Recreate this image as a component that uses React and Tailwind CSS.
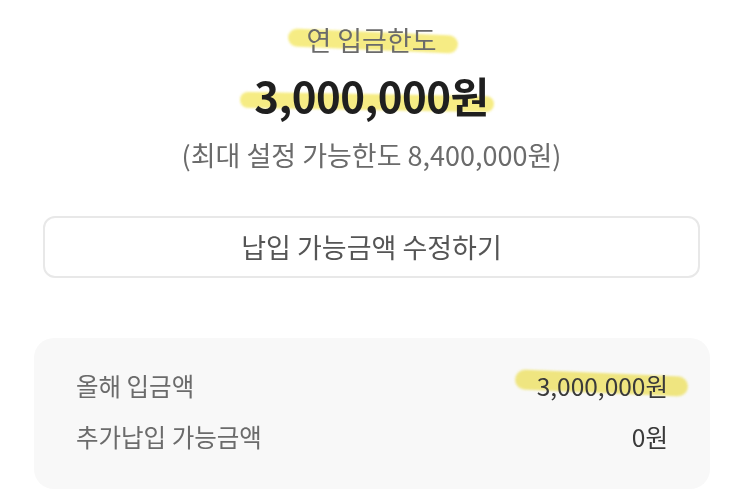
import React from "react";

function Mark({ className }) {
  return (
    <span
      className={`pointer-events-none absolute rounded-full bg-[#f3e65a] opacity-75 mix-blend-multiply blur-[1px] ${className}`}
    />
  );
}

export default function App() {
  return (
    <div className="w-[743px] h-[499px] overflow-hidden bg-white font-['Noto_Sans_CJK_KR',sans-serif]">
      <div className="flex flex-col items-center pt-[23px]">
        <div className="relative">
          <Mark className="left-[-18px] right-[-22px] top-[9px] h-[18px] rotate-[2.5deg]" />
          <span className="relative text-[27px] leading-[34px] text-[#6b6b6b]">연 입금한도</span>
        </div>
        <div className="relative mt-[15px]">
          <Mark className="left-[-14px] right-[-6px] top-[22px] h-[16px] rotate-[1deg]" />
          <span className="relative text-[42px] leading-[46px] font-bold text-[#1f1f1f] tracking-[-0.5px]">3,000,000원</span>
        </div>
        <div className="mt-[20px] text-[27px] leading-[34px] text-[#6b6b6b]">(최대 설정 가능한도 8,400,000원)</div>
      </div>
      <div className="mx-[43px] mt-[44px] h-[62px] rounded-[12px] border-2 border-[#e8e8e8] flex items-center justify-center">
        <span className="text-[27px] text-[#555555]">납입 가능금액 수정하기</span>
      </div>
      <div className="ml-[34px] mr-[33px] mt-[60px] h-[151px] rounded-[20px] bg-[#f8f8f8] px-[42px] pt-[33px] flex flex-col gap-[21px]">
        <div className="flex items-center justify-between h-[30px]">
          <span className="text-[24.5px] text-[#6b6b6b]">올해 입금액</span>
          <span className="relative">
            <Mark className="left-[-22px] right-[-20px] top-[5px] h-[20px] rotate-[2.5deg]" />
            <span className="relative text-[24.5px] text-[#3a3a3a]">3,000,000원</span>
          </span>
        </div>
        <div className="flex items-center justify-between h-[30px]">
          <span className="text-[24.5px] text-[#6b6b6b]">추가납입 가능금액</span>
          <span className="text-[24.5px] text-[#3a3a3a]">0원</span>
        </div>
      </div>
    </div>
  );
}
